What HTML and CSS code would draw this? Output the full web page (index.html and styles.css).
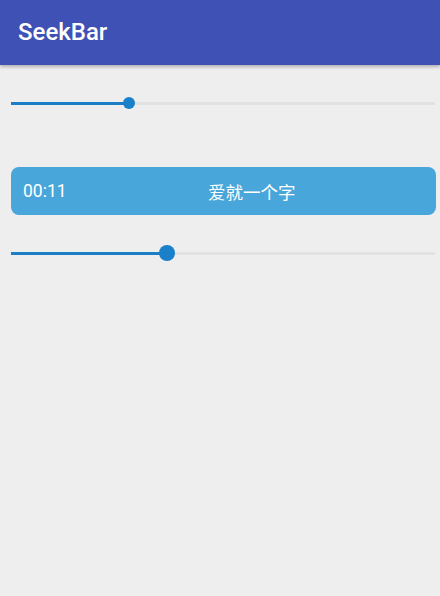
FILE: index.html
```html
<!DOCTYPE html>
<html>
	<head>
		<meta charset="UTF-8">
		<title>SeekBar</title>
		<link rel="stylesheet" href="styles.css">
	</head>
	<body>

<div class="toolbar">
    <span class="title">SeekBar</span>
</div>

<div class="content">
    <!--第一个进度条-->
    <div class="seek seek-small">
        <div class="track">
            <div class="progress" style="width: 118px;"><span class="thumb"></span></div>
        </div>
    </div>

    <!--播放条-->
    <div class="player">
        <span class="time">00:11</span>
        <span class="song">爱就一个字</span>
    </div>

    <!--第二个进度条-->
    <div class="seek seek-big">
        <div class="track">
            <div class="progress" style="width: 156px;"><span class="thumb"></span></div>
        </div>
    </div>
</div>

</body>
</html>
```

FILE: styles.css
```css
* {
    padding: 0;
    margin: 0;
    box-sizing: border-box;
}

body {
    background-color: #eeeeee;
    font-family: Roboto, "Noto Sans CJK SC", sans-serif;
    width: 440px;
    height: 596px;
    overflow: hidden;
}

.toolbar {
    height: 65px;
    background-color: #3f51b5;
    padding-left: 18px;
    display: flex;
    align-items: center;
    box-shadow: 0 2px 3px rgba(0, 0, 0, 0.25);
    position: relative;
}

.toolbar .title {
    color: #fff;
    font-size: 24px;
    font-weight: 500;
    padding-bottom: 1px;
}

.content {
    padding: 0 5px 0 11px;
}

.seek {
    display: flex;
    align-items: center;
}

.seek-small {
    height: 20px;
    margin-top: 28px;
}

.seek-big {
    height: 20px;
    margin-top: 28px;
}

.track {
    flex: 1;
    height: 3px;
    background-color: #e2e2e2;
}

.progress {
    height: 3px;
    background-color: #1c7fc6;
    position: relative;
}

.thumb {
    position: absolute;
    right: 0;
    top: 50%;
    border-radius: 50%;
    background-color: #1a80c9;
}

.seek-small .thumb {
    width: 12px;
    height: 12px;
    margin: -6px -6px 0 0;
}

.seek-big .thumb {
    width: 16px;
    height: 16px;
    margin: -8px -8px 0 0;
}

.player {
    margin-top: 54px;
    margin-right: -1px;
    height: 48px;
    background-color: #48a6da;
    border-radius: 8px;
    display: flex;
    align-items: center;
    padding-left: 12px;
    color: #fff;
    font-size: 17.5px;
}

.player .time {
    width: 185px;
}
```
